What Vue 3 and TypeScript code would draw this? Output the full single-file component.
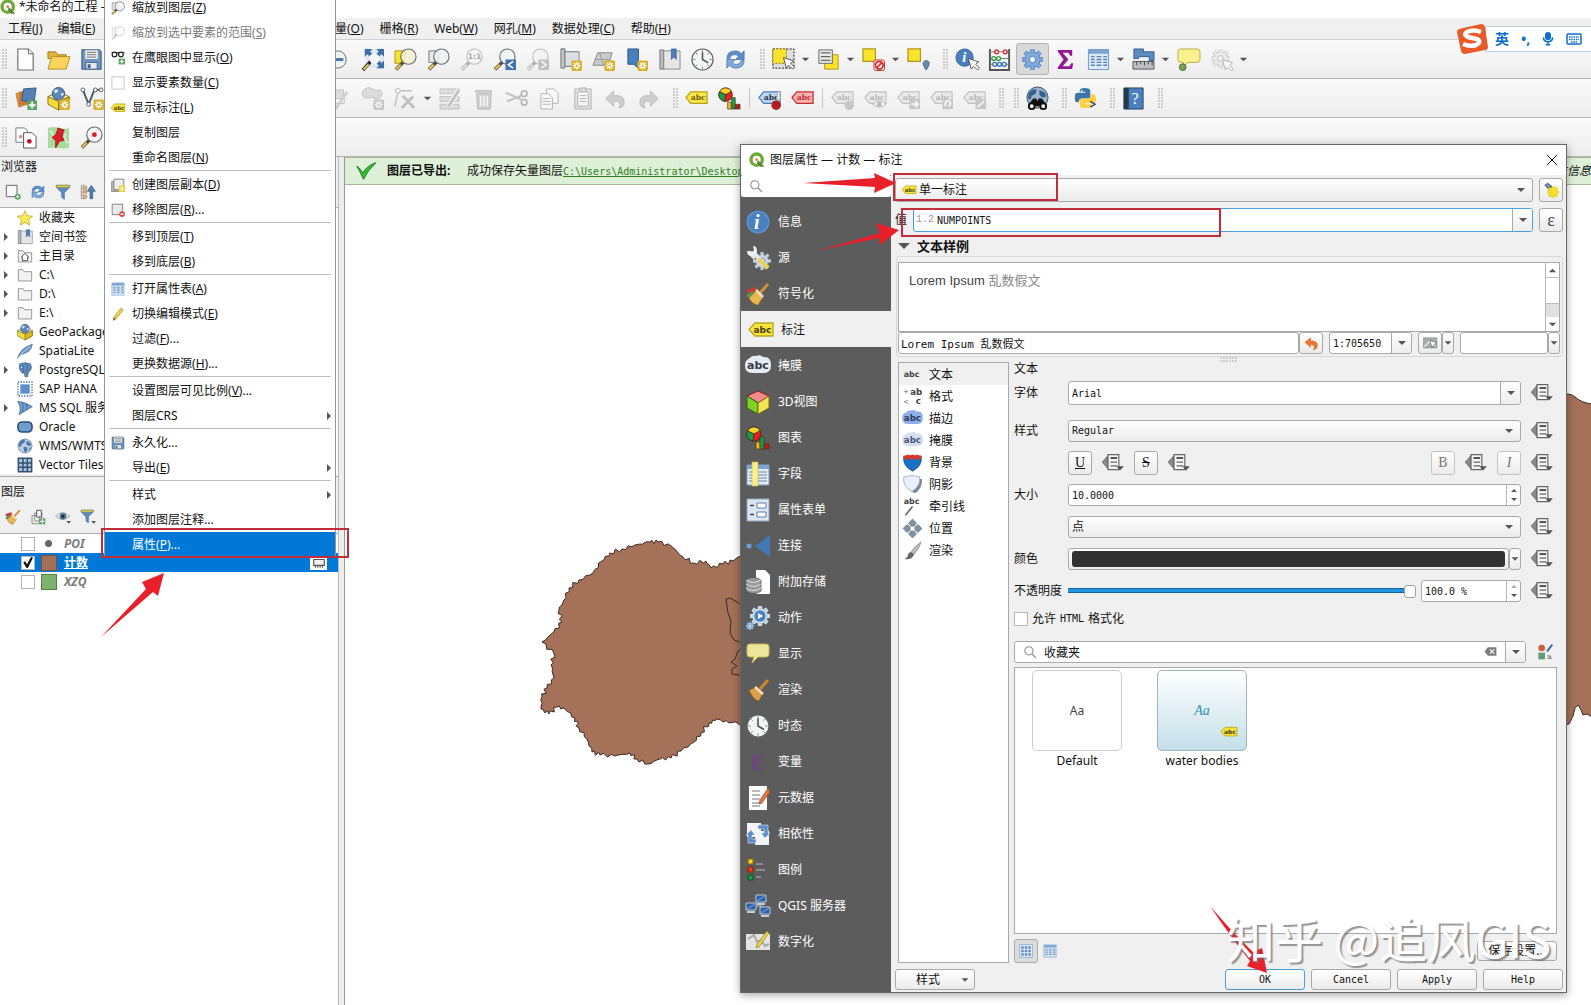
<script setup lang="ts">
import { h, ref } from 'vue'

const star = (x: number, y: number, c = '#d9b12e') =>
  `<rect x="${x}" y="${y}" width="11" height="11" rx="1.5" fill="${c}"/><path d="M${x + 5.5} ${y + 1.5}v8M${x + 1.5} ${y + 5.5}h8M${x + 2.7} ${y + 2.7}l5.6 5.6M${x + 8.3} ${y + 2.7}l-5.6 5.6" stroke="#fff" stroke-width="1.3"/><circle cx="${x + 5.5}" cy="${y + 5.5}" r="1.2" fill="${c}"/>`
const lens = (fill = '#eef2f4') =>
  `<path d="M10 14.500 2 22.500" stroke="#554a33" stroke-width="3.600"/><path d="M7 17.500 2.300 22.200" stroke="#f0c75e" stroke-width="2"/><circle cx="15" cy="9" r="8" fill="${fill}" fill-opacity=".85" stroke="#6a6f72" stroke-width="1.200"/>`
const tag = (fill: string, line: string, ink: string) =>
  `<path d="M6 5h17v12H6L1 11z" fill="${fill}" stroke="${line}" stroke-width="1.300"/><text x="6" y="14" font-family="DejaVu Serif" font-size="8" font-weight="700" fill="${ink}">abc</text>`
const disk = `<path d="M2 2h18l2 2v18H2z" fill="#6d97c4" stroke="#3c5f8a" stroke-width="1.200"/><path d="M5 2h14v10H5z" fill="#f2f2f2" stroke="#68809c" stroke-width=".8"/><path d="M7 4.500h10M7 7h10M7 9.500h10" stroke="#666"/><path d="M6 15h12v7H6z" fill="#e8e8e8" stroke="#3c5f8a"/><path d="M8 17h3v4H8z" fill="#3c5f8a"/>`
const table = `<path d="M1.500 1.500h21v21h-21z" fill="#dbe8f6" stroke="#6f96c6"/><path d="M2 2h20v4H2z" fill="#7ba3d3"/><path d="M4 9h4M10 9h5M17 9h4M4 12h4M10 12h5M17 12h4M4 15h4M10 15h5M17 15h4M4 18h4M10 18h5M17 18h4" stroke="#5c83b4" stroke-width="1.400"/>`
const globe = `<circle cx="12" cy="12" r="10.500" fill="#b9cde0" stroke="#4f6f90"/><path d="M4 6q5-5 8-3l-1 4-4 2-1 4-4-1zM14 4l6 3 1 4-4 1-3-3zM10 13l5 1 1 4-4 4-2-4zM18 15l3-1-2 5z" fill="#4b76a8"/>`
const box3d = `<path d="M1 10 12 15l11-5v8l-11 6-11-6z" fill="#f4dc3e" stroke="#8a7414"/><path d="M12 15v9l11-6v-8z" fill="#d9b520" stroke="#8a7414"/><path d="M1 10 12 5l11 5-11 5z" fill="#fff6b8" stroke="#8a7414"/><circle cx="12" cy="7" r="6.500" fill="#5c86b8" stroke="#3b5a80"/><path d="M7 4q3-3 5 0l-3 3zM14 7l4-1-2 4z" fill="#dbe8f4"/>`
const chart = `<circle cx="8" cy="8" r="7" fill="#e3201b" stroke="#3c2a10" stroke-width=".8"/><path d="M8 8 1.500 5A7 7 0 0 1 14 4.500z" fill="#f8d32c" stroke="#3c2a10" stroke-width=".8"/><path d="M8 8 7 15A7 7 0 0 1 1.500 5z" fill="#1d9a4a" stroke="#3c2a10" stroke-width=".8"/><path d="M10 16h4v7h-4z" fill="#f0b429" stroke="#3c2a10" stroke-width=".6"/><path d="M14 11h4v12h-4z" fill="#1d9a4a" stroke="#3c2a10" stroke-width=".6"/><path d="M18 18h5v5h-5z" fill="#b3211c" stroke="#3c2a10" stroke-width=".6"/>`
const refresh = `<path d="M3 11q0-8 9-8 4 0 6 3l3-3v9h-9l3-3q-2-3-5-2-3 0-4 4z" fill="#5b8fcb" stroke="#3a6ba5" stroke-width=".7"/><path d="M21 13q0 8-9 8-4 0-6-3l-3 3v-9h9l-3 3q2 3 5 2 3 0 4-4z" fill="#7fa9da" stroke="#3a6ba5" stroke-width=".7"/>`
const funnel = `<path d="M2 2h20v3l-8 8v10l-4-3v-7L2 5z" fill="#5c8cc0" stroke="#3e6797"/><path d="M2 2h20v3H2z" fill="#f0dd5a" stroke="#8f8630"/>`
const clock = `<circle cx="12" cy="12" r="11" fill="#f3f5f6" stroke="#5c6266" stroke-width="1.200"/><path d="M12 2.500v2M12 19.500v2M2.500 12h2M19.500 12h2M5.300 5.300l1.300 1.300M17.400 17.400l1.300 1.300M18.700 5.300l-1.300 1.300M5.300 18.700l1.300-1.300" stroke="#666"/><path d="M12 4.500V12l6 3.500" fill="none" stroke="#4b5054" stroke-width="1.600"/>`
const gearShape = (cx: number, cy: number, r: number, fill: string, line: string) => {
  let d = ''
  for (let i = 0; i < 8; i++) {
    const a = (i * Math.PI) / 4
    d += `M${cx} ${cy}L${(cx + Math.cos(a) * r).toFixed(1)} ${(cy + Math.sin(a) * r).toFixed(1)}`
  }
  return `<path d="${d}" stroke="${line}" stroke-width="${r * 0.42}"/><circle cx="${cx}" cy="${cy}" r="${r * 0.72}" fill="${fill}" stroke="${line}"/><path d="${d}" stroke="${fill}" stroke-width="${r * 0.26}"/><circle cx="${cx}" cy="${cy}" r="${r * 0.3}" fill="#f4f4f4" stroke="${line}"/>`
}
const cursor = (x: number, y: number) =>
  `<path d="M${x} ${y}l3 11 2.500-3 4 4 2-2-4-4 3-2.500z" fill="#fff" stroke="#555"/>`
const page = `<path d="M4 1h11l5 5v17H4z" fill="#fff" stroke="#6b6b6b" stroke-width="1.200"/><path d="M15 1v5h5" fill="#eee" stroke="#6b6b6b"/>`
const folder = `<path d="M2 4h7l2 3h11v14H2z" fill="#f2f2f2" stroke="#8b8b8b" stroke-width="1.300"/>`
const scroll = `<path d="M2 1h4v18h14V4H6" fill="#d4d6d8" stroke="#777"/><path d="M6 4h15v15H6z" fill="#dcdedf" stroke="#888"/><path d="M2 1h4v20H2z" fill="#c1c4c6" stroke="#777"/>`
const broom = `<path d="m14 11 8-9" stroke="#c98832" stroke-width="3"/><path d="M3 12l8-3 6 6-4 8q-6-1-10-11z" fill="#dfa04b" stroke="#8c5a1d" stroke-width=".7"/><path d="m9 9 8 7" stroke="#f3dfb5" stroke-width="2.500"/>`
const paintbrush = `<path d="m14 11 8-9" stroke="#d0913b" stroke-width="3"/><path d="M0 8l9-3 5 6-8 5z" fill="#c73e38"/><path d="M0 14l6 3 4-4-4-4z" fill="#579c56"/><path d="M3 16l7-7 7 6-5 8q-6-1-9-7z" fill="#e9b552" stroke="#987427" stroke-width=".7"/><path d="m10 8 7 7" stroke="#f3dfb5" stroke-width="2.500"/>`
const pencil = `<path d="M17 2l4 3L9 20l-5 3 1-6z" fill="#f3d34a" stroke="#93792b"/><path d="m4 23 1-5 3 2z" fill="#635a40"/>`
const elephant = `<path d="M4 3q8-4 16 0 4 6-1 11l-2 2-1 6h-4l-1-6-3 1q-6-5-4-14z" fill="#5e8cbd" stroke="#31577f"/><path d="M9 5q0 6 1 11M15 5q2 5-1 10" fill="none" stroke="#31577f"/><circle cx="7" cy="8" r="1" fill="#fff"/>`
const abcText = (fill: string, halo: string) =>
  `<path d="M4 4q2-3 6-2 4-2 7 1 8-1 8 8 0 8-7 8H6q-7 0-7-8 0-5 5-7z" fill="${halo}"/><text x="1" y="15" font-family="DejaVu Sans" font-size="11" font-weight="700" fill="${fill}">abc</text>`
const server = (x: number, y: number) =>
  `<path d="M${x} ${y}h10v7H${x}z" fill="#2e62a8" stroke="#b9c7d6"/><path d="M${x + 1} ${y + 9}h8" stroke="#c8cdd2" stroke-width="2"/><path d="M${x + 1} ${y + 6}l8-5" stroke="#7ea5d6"/>`
const off = (s: string) => `<g opacity=".4" style="filter:grayscale(1)">${s}</g>`
const square = (x: number, y: number) => `<path d="M${x} ${y}h13v13h-13z" fill="#fbe32c" stroke="#ab9a1e" stroke-width="1.300"/>`

const icons: Record<string, string> = {
  qgis: `<circle cx="11.500" cy="11.500" r="8.500" fill="none" stroke="#73a83c" stroke-width="5"/><path d="m13 12 10 10h-6l-5-5z" fill="#4f8a2b"/><circle cx="11.500" cy="11.500" r="2" fill="#e8793a"/>`,
  page,
  open: `<path d="M1 4h8l2 3h9v4H1z" fill="#e3b23a" stroke="#a07c1f"/><path d="M1 22 5 9h19l-4 13z" fill="#fbd55b" stroke="#b58d28"/>`,
  save: disk,
  zoomout: `<circle cx="10" cy="12" r="9" fill="#eef2f6" stroke="#6a6f72"/><path d="M4 12h12" stroke="#4474a8" stroke-width="3"/>`,
  zoomfull: `<path d="M4 1h20v20H4z" fill="#dfe9f4"/><path d="M4 1h8L4 9zM24 1v8l-8-8zM24 21h-8l8-8z" fill="#3f6fa8"/><path d="M5 2l6 6M23 2l-6 6M23 20l-6-6" stroke="#3f6fa8" stroke-width="4"/><path d="M11 13 2 23" stroke="#222" stroke-width="3.500"/><path d="M8 17l-5.500 5.500" stroke="#f0c75e" stroke-width="2"/><circle cx="14" cy="11" r="5.500" fill="#f4f6f8"/>`,
  zoomsel: `<path d="M1 3h10v13H1z" fill="#fbe32c" stroke="#ab9a1e"/>` + lens('#f4f0ce'),
  zoomlayer: `<path d="M2 3h10v12H2z" fill="#e8e8e8" stroke="#777"/>` + lens(),
  zoomnative: off(lens() + `<text x="8" y="12" font-family="DejaVu Sans" font-size="8" font-weight="700" fill="#333">1:1</text>`),
  zoomlast: lens() + `<path d="M13 12h11v11H13z" fill="#3f73af"/><path d="m21 14-5 3.500 5 3.500" fill="none" stroke="#fff" stroke-width="1.600"/>`,
  zoomnext: off(lens() + `<path d="M13 12h11v11H13z" fill="#777"/><path d="m16 14 5 3.500-5 3.500" fill="none" stroke="#fff" stroke-width="1.600"/>`),
  newmap: scroll + star(13, 13),
  new3d: `<path d="M6 5h15l-4 13H1z" fill="#c8cbcc" stroke="#888"/><path d="m8 5 4 13M3 12h16" stroke="#999"/>` + star(13, 13),
  bookmark: `<path d="M3 1h11v20l-5-4H3z" fill="#4a7fbd" stroke="#2d5788"/>` + star(13, 13),
  book: `<path d="M2 2h4v20H2z" fill="#b9bcbe" stroke="#777"/><path d="M6 3h17v19H6z" fill="#e6e6e6" stroke="#888"/><path d="M14 1h5v11l-2.500-3-2.500 3z" fill="#4a7fbd" stroke="#2d5788" stroke-width=".7"/>`,
  clock,
  refresh,
  select: `<path d="M1 1h22v20H1z" fill="#ddd" stroke="#111" stroke-dasharray="2 1.500"/><path d="M1 1h14v15H1z" fill="#fbe32c" stroke="#80752a" stroke-dasharray="2 1.500"/>` + cursor(12, 10),
  selform: `<path d="M8 7h14v15H8z" fill="#fbe32c" stroke="#ab9a1e"/><path d="M2 2h14v14H2z" fill="#e9eaea" stroke="#666"/><path d="M4 5h10M4 9h10M4 13h10" stroke="#666" stroke-width="1.300"/>`,
  deselect: square(1, 1) + `<rect x="12.500" y="12.500" width="11" height="11" rx="2" fill="#fff" stroke="#b33"/><circle cx="18" cy="18" r="4" stroke="#d33" stroke-width="2"/><path d="m15 21 6-6" stroke="#d33" stroke-width="2"/>`,
  selloc: square(1, 1) + `<path d="M20 23q-4-6-3-8 3-4 6 0 1 2-3 8z" fill="#6b89a8" stroke="#48637f"/>`,
  identify: `<circle cx="10" cy="10" r="9" fill="#4a7fbd" stroke="#356398"/><text x="7.500" y="15" font-family="Liberation Serif" font-size="15" font-style="italic" font-weight="700" fill="#fff">i</text>` + cursor(14, 11),
  abacus: `<path d="M2 1v22h20V1M1 23h22" fill="none" stroke="#555" stroke-width="2"/><path d="M2 4h20M2 11h20M2 17h20" stroke="#777"/><g fill="#fff" stroke-width="1.500"><g stroke="#c33"><circle cx="9" cy="4" r="2"/><circle cx="18" cy="4" r="2"/></g><g stroke="#3a9a4a"><circle cx="6" cy="11" r="2"/><circle cx="11" cy="11" r="2"/></g><g stroke="#3f73af"><circle cx="7" cy="17" r="2"/><circle cx="12" cy="17" r="2"/><circle cx="17" cy="17" r="2"/></g></g>`,
  gear: gearShape(12, 12, 11, '#7fa9da', '#4a7fbd'),
  sigma: `<path d="M4 2h15v6h-2l-2-3H9l6 7-6 7h7l2-3h2l-1 6H4v-2l6-8-6-8z" fill="#93178f"/>`,
  table,
  measure: `<path d="M2 1h10v3h11v9h-5v-4H7v2H2z" fill="#5c8cc0" stroke="#34608f"/><path d="M1 14h22v8H1z" fill="#bcbfc1" stroke="#555"/><path d="M5 14v4M9 14v3M13 14v4M17 14v3M21 14v4" stroke="#444"/>`,
  tip: `<path d="M4 1h17q3 0 3 3v8q0 3-3 3H11l-5 6 1-6H4q-3 0-3-3V4q0-3 3-3z" fill="#faf08e" stroke="#b8ac4a"/><circle cx="6" cy="20" r="3.500" fill="#7aa05c" stroke="#4e7038"/>`,
  action: off(gearShape(11, 11, 10, '#ddd', '#777') + cursor(13, 12)),
  addlayer: `<path d="M2 7l9-3 3 14-9 3z" fill="#e8962f" stroke="#a3601a" stroke-width=".6"/><path d="m5 5 10-1 1 14-11 1z" fill="#c9793a"/><path d="M10 2l13-1-2 15-13-2z" fill="#5482b5" stroke="#345a85"/><path d="M14 14h10v10H14z" fill="#5aa467"/><path d="M19 15.500v7M15.500 19h7" stroke="#fff" stroke-width="2"/>`,
  geopackage: box3d + star(13, 13),
  geopkg: box3d,
  newvector: `<path d="M3 3 9 18l6-15h6" fill="none" stroke="#445566" stroke-width="2"/><g fill="#fff" stroke="#556"><circle cx="3" cy="3" r="2"/><circle cx="9" cy="18" r="2"/><circle cx="16" cy="3" r="2"/><circle cx="22" cy="3" r="2"/></g>` + star(14, 13),
  print: off(`<path d="M1 3h15v14H1z" fill="#bbb" stroke="#777"/><path d="M3 12h14v5H3z" fill="#fff" stroke="#777"/><path d="M20 5 8 23" stroke="#999" stroke-width="3"/>`),
  blob: off(`<path d="M4 2q4-3 8 0t8 1q4 4 0 8-3 3-8 0-8 1-9 0-4-5 1-9z" fill="#b5b5b5" stroke="#777"/>` + star(13, 13, '#888')),
  node: off(`<circle cx="4" cy="4" r="2.500" fill="#fff" stroke="#555"/><path d="M4 6 1 20M7 4h12" stroke="#777" stroke-width="1.500"/><path d="m9 9 12 13M20 10 8 22" stroke="#777" stroke-width="3"/>`),
  attrs: off(`<path d="M1 2h20v5H1zM1 10h20v5H1zM1 18h20v5H1z" fill="#bdbdb0" stroke="#777"/><path d="M21 3 10 20" stroke="#fff" stroke-width="5"/><path d="M21 3 10 20" stroke="#777" stroke-width="3"/>`),
  trash: off(`<path d="M5 7h15l-1 16H6z" fill="#c99" stroke="#844"/><path d="M3 3h18v3H3z" fill="#b77"/><path d="M9 9v11M12.500 9v11M16 9v11" stroke="#fff" stroke-width="1.500"/>`),
  cut: off(`<path d="m1 6 16 7M2 15l15-6" stroke="#777" stroke-width="2"/><circle cx="20" cy="7" r="3" fill="none" stroke="#555" stroke-width="1.600"/><circle cx="20" cy="16" r="3" fill="none" stroke="#555" stroke-width="1.600"/>`),
  copy: off(`<path d="M9 2h8l4 4v11H9z" fill="#fff" stroke="#555"/><path d="M3 7h8l4 4v12H3z" fill="#fff" stroke="#555"/><path d="M5 12h8M5 15h8M5 18h8" stroke="#555"/>`),
  paste: off(`<path d="M4 2h17v21H4z" fill="#ccc" stroke="#555"/><path d="M7 5h11v15H7z" fill="#fff" stroke="#555"/><path d="M9 9h7M9 12h7M9 15h7M9 1h7v4H9z" stroke="#555"/>`),
  undo: off(`<path d="M10 4v5q11-1 11 7 0 5-5 6 3-9-6-7v5L2 12z" fill="#999" stroke="#666"/>`),
  redo: off(`<path d="M14 4v5Q3 8 3 16q0 5 5 6-3-9 6-7v5l8-8z" fill="#999" stroke="#666"/>`),
  tag: tag('#fae849', '#b5a01e', '#6c5c10'),
  chart,
  tagpin: tag('#bcd6ee', '#4a7fbd', '#234') + `<circle cx="19" cy="19" r="5" fill="#b01e20"/><path d="M20 5h3v9h-3z" fill="#eee" stroke="#888" stroke-width=".6"/>`,
  tagred: tag('#f6b5b2', '#c92b2b', '#c92b2b'),
  tagoff1: off(tag('#ddd', '#777', '#555') + `<circle cx="19" cy="19" r="5" fill="#888"/>`),
  tagoff2: off(tag('#ddd', '#777', '#555') + `<path d="M9 18q7-7 14 0-7 6-14 0z" fill="#fff" stroke="#555"/><circle cx="16" cy="18" r="2.500" fill="#666"/>`),
  tagoff3: off(tag('#ddd', '#777', '#555') + `<path d="M13 13h11v10H13z" fill="#888"/><path d="M15 18h7m-3-3 3 3-3 3" fill="none" stroke="#fff" stroke-width="2"/>`),
  tagoff4: off(tag('#ddd', '#777', '#555') + `<path d="M13 13h11v10H13z" fill="#888"/><path d="M16 20v-4q3-3 5 0 1 3-2 4" fill="none" stroke="#fff" stroke-width="2"/>`),
  tagoff5: off(tag('#ddd', '#777', '#555') + `<path d="M13 13h11v10H13z" fill="#888"/><path d="m15 21 7-6" stroke="#fff" stroke-width="2"/>`),
  metasearch: `<circle cx="12" cy="11" r="11" fill="#9bb4cc" stroke="#35506f"/><path d="M3 6q5-5 8-3l-1 4-4 2-1 4-3-1zM14 3l6 3 1 4-4 1-3-3z" fill="#35608f"/><path d="M3 20 8 13h2l2 4 2-4h2l5 7" fill="#111" stroke="#111" stroke-width="2"/><circle cx="6" cy="20" r="3" fill="#fff" stroke="#111" stroke-width="2"/><circle cx="18" cy="20" r="3" fill="#fff" stroke="#111" stroke-width="2"/>`,
  python: `<path d="M11 1q6 0 6 3v6q0 2-3 2H8q-3 0-3 4H3q-3-1-2-7 0-3 3-3h8V5H6V3q1-2 5-2z" fill="#3d75a8"/><path d="M12 22q-6 0-6-3v-5q0-2 3-2h6q3 0 3-5h2q3 1 3 6 0 4-3 4h-8v1h6v2q-1 2-6 2z" fill="#fbd043"/><circle cx="8" cy="4" r="1" fill="#fff"/><path d="m17 15 5 3-5 3" fill="none" stroke="#345" stroke-width="1.500"/>`,
  help: `<path d="M2 1h20v22H2z" fill="#4a7fbd" stroke="#24415f"/><path d="M2 1h5v22H2z" fill="#27384a"/><text x="10" y="18" font-family="Liberation Serif" font-size="17" fill="#fff">?</text>`,
  dotpages: `<path d="M2 2h9l3 3v12H2z" fill="#fff" stroke="#777"/><circle cx="7" cy="11" r="2" fill="#e88"/><path d="M10 7h9l4 4v12H10z" fill="#fff" stroke="#555"/><circle cx="16" cy="16" r="2.500" fill="#c8102e"/>`,
  pinmap: `<path d="M1 2q6-2 11 0t11 0v21q-6 1-11 0t-11 0z" fill="#a6dc9c"/><path d="M3 5q6 5 1 9M20 8q-5 4 2 10" stroke="#d8efcc" stroke-width="2" fill="none"/><path d="m11 2 7 2-1 2-1 5 2 4-5 1-4 7 0-8-4-3 4-3 2-5z" fill="#dc1f26" stroke="#8e1015" stroke-width=".7"/>`,
  dotlens: lens('#f3f3f3') + `<circle cx="15" cy="9" r="2.500" fill="#d81e26"/>`,
  boxplus: `<path d="M2 2h16v17H2z" fill="#f8f8f8" stroke="#555" stroke-width="1.300"/><circle cx="19" cy="19" r="4.500" fill="#5aa467"/><path d="M19 16.500v5M16.500 19h5" stroke="#fff" stroke-width="1.300"/>`,
  funnel,
  collapse: `<path d="M8 2H2v20h6M2 7h6M2 12h6M2 17h6" fill="none" stroke="#777"/><path d="M5 4h5v4H5zM5 10h5v4H5zM5 17h5v4H5z" fill="#e8bd89" stroke="#b17a35"/><path d="M15 22V11h-4l6-9 6 9h-4v11z" fill="#4f7fb0" stroke="#2d5788"/>`,
  fav: `<path d="m12 1 3.300 7.500 8.200.8-6.200 5.400 1.800 8.100-7.100-4.200-7.100 4.200 1.800-8.100L.5 9.300l8.200-.8z" fill="#fbec53" stroke="#b09a1c"/>`,
  home: folder + `<path d="M6 14l6-6 6 6M8 13v6h8v-6" fill="#fff" stroke="#444" stroke-width="1.400"/>`,
  folder,
  feather: `<path d="M1 23Q4 8 23 2q-2 12-14 14l-4 2z" fill="#6f9ccb" stroke="#3b5f88"/><path d="M1 23Q8 13 20 5" fill="none" stroke="#e3edf6"/>`,
  postgres: elephant,
  hana: `<path d="M1.500 1.500h21v21h-21z" fill="#fff" stroke="#3f6fa8" stroke-width="2" stroke-dasharray="2 2"/><path d="M5 5h14v14H5z" fill="#5b8fcb"/>`,
  mssql: `<path d="M1 2q12 1 22 8-10 6-20 12 4-10-2-20z" fill="#6f9ccb" stroke="#34608f"/><path d="M8 4q3 8 0 14M14 6q2 5 0 9" fill="none" stroke="#34608f"/>`,
  oracle: `<rect x="1.500" y="4.500" width="21" height="15" rx="6" fill="#6f9ccb" stroke="#2d4f78" stroke-width="2.500"/>`,
  globe,
  grid: `<path d="M2 2h20v20H2zM9 2v20M15.500 2v20M2 9h20M2 15.500h20" fill="#a9c3e2" stroke="#35506f" stroke-width="2.200"/>`,
  style: paintbrush,
  group: `<path d="M3 10h11v12H3zM7 6h11v12H7z" fill="#eee" stroke="#666"/><path d="M10 2h7v10h-7z" fill="#fff" stroke="#555" stroke-width="1.500"/><path d="M14 14h9v9h-9z" fill="#5aa467"/><path d="M18.500 15v7M15 18.500h7" stroke="#fff" stroke-width="1.500"/>`,
  eye: `<path d="M1 11q10-11 21 0-11 9-21 0z" fill="#eef2f5" stroke="#6f8597"/><circle cx="12" cy="11" r="5" fill="#4f7290"/><circle cx="12" cy="11" r="2" fill="#122"/><path d="M17 18h7l-3.500 4z" fill="#555"/>`,
  funneldd: `<g transform="scale(.9)">${funnel}</g><path d="M17 18h7l-3.500 4z" fill="#555"/>`,
  glasses: `<path d="M1 3h22" stroke="#222" stroke-width="2"/><circle cx="6" cy="6" r="4" fill="#fff" stroke="#222" stroke-width="2"/><circle cx="17" cy="6" r="4" fill="#fff" stroke="#222" stroke-width="2"/><path d="M13 13h11v10H13z" fill="#5aa467"/><path d="M18.500 14.500v7M15 18h7" stroke="#fff" stroke-width="2"/>`,
  box: `<path d="M1.500 1.500h21v21h-21z" fill="#fff" stroke="#bbb" stroke-width="1.400"/>`,
  dup: `<path d="M1 6h5v16h14v1H1z" fill="#bbb" stroke="#666"/><path d="M5 2h17v18H5z" fill="#efefef" stroke="#666" stroke-width="1.300"/>` + star(13, 13, '#e8cf3b'),
  remove: `<path d="M2 2h18v18H2z" fill="#e9e9e9" stroke="#666" stroke-width="1.300"/><circle cx="19" cy="19" r="5" fill="#dc4b4b"/><path d="M16 19h6" stroke="#fff" stroke-width="2"/>`,
  zoomoff: off(`<path d="M2 3h10v12H2z" fill="#e8e8e8" stroke="#777"/>` + lens()),
  pencil,
  info: `<circle cx="12" cy="12" r="11.500" fill="#5b93d1"/><circle cx="12" cy="12" r="10" fill="#4a80c0"/><text x="8" y="19" font-family="Liberation Serif" font-size="20" font-style="italic" font-weight="700" fill="#fff">i</text>`,
  source: gearShape(16, 15, 9, '#c9d4df', '#8292a3') + `<path d="m3 6 6 6M9 8 21 22" stroke="#e4e6e8" stroke-width="4"/><path d="M1 5q0 5 5 5t5-5-4-5l1 4-2 2-3-1z" fill="#edeff0"/><path d="m12 13 10 9" stroke="#e8d25a" stroke-width="4"/>`,
  masks: abcText('#333a44', '#e6ecf5'),
  cube: `<path d="m12 1 11 5-11 7L1 6z" fill="#f28a8a" stroke="#8a1c1c"/><path d="m1 6 11 7v11L1 18z" fill="#7ed321" stroke="#355c0c"/><path d="m23 6-11 7v11l11-6z" fill="#f5e553" stroke="#7c7113"/>`,
  fields: `<path d="M1 3h22v20H1z" fill="#e4ecf6" stroke="#7d9bc2"/><path d="M1 3h22v4H1z" fill="#7ba3d3"/><path d="M3 10h18M3 13h18M3 16h18M3 19h18" stroke="#6b86a8"/><path d="M6 0h6v24H6z" fill="#faf08e" stroke="#c9bb4b" stroke-width=".7"/>`,
  form: `<path d="M1 1h22v22H1z" fill="#dce6f1" stroke="#8ea7c4"/><path d="M11 5h9v5h-9zM11 14h9v5h-9z" fill="#fff" stroke="#5d7ea8"/><path d="M4 7.500h4M4 16.500h4" stroke="#444" stroke-width="1.500"/>`,
  join: `<circle cx="3" cy="12" r="2.500" fill="#6da1d8"/><path d="M24 1v22L9 12z" fill="#4279b5"/>`,
  storage: `<path d="M10 0h9l5 5v19H10z" fill="#fff"/><path d="M0 10q7-5 15 0v11q-7 5-15 0z" fill="#9a9a9a" stroke="#555" stroke-width=".8"/><path d="M0 10q7 5 15 0M0 14q7 5 15 0M0 18q7 5 15 0" fill="none" stroke="#ddd"/>`,
  actions: gearShape(14, 10, 10, '#b8cfe8', '#e6ebf0') + `<circle cx="14" cy="10" r="5.500" fill="#4a80c0"/><path d="m12 7 5 3-5 3z" fill="#fff"/>` + gearShape(4, 20, 4, '#7fa9da', '#a9c3e2'),
  bubble: `<path d="M4 2h16q3 0 3 3v7q0 3-3 3h-8l-6 6 2-6H4q-3 0-3-3V5q0-3 3-3z" fill="#efe59a" stroke="#c8b95b"/>`,
  broom,
  eps: `<text x="5" y="20" font-family="Liberation Serif" font-size="31" font-weight="700" fill="#6d4583">ε</text>`,
  metadata: `<path d="M3 0h18v24H3z" fill="#fff"/><path d="M6 5h8M6 9h8M6 13h8M6 17h10M6 20h8" stroke="#777"/><path d="m22 2 2 4-8 11-3 1 1-4z" fill="#df7647" stroke="#8a4a2a" stroke-width=".6"/>`,
  deps: `<path d="M1 1h14v14H1zM9 9h14v14H9z" fill="#f2f4f7"/><path d="M12 3h10v8l2 0-5 5-4-5h3V7h-6zM10 21H2v-8H0l5-5 4 5H6v4h4z" fill="#5b8fcb" stroke="#dfe8f3" stroke-width=".6"/>`,
  legend: `<path d="M2 1h5v5H2z" fill="#f8d32c" stroke="#7b6712"/><path d="M2 9h5v5H2z" fill="#e8401c" stroke="#7c210d"/><path d="M2 17h5v5H2z" fill="#1d9a4a" stroke="#0d4e24"/><path d="M10 6h7M10 12h9M10 19h5" stroke="#9a9a9a" stroke-width="1.500"/>`,
  network: `<path d="M6 15V12h10v4" fill="none" stroke="#bbb"/>` + server(10, 1) + server(0, 9) + server(14, 13),
  digitize: `<path d="M0 4h24v16H0z" fill="#e4e4e0"/><path d="m2 9 6-4 3 7 4-2 4 6 4-2" fill="none" stroke="#a5a9b0" stroke-width="2"/><path d="M21 1l2 2-10 14-3 1 1-4z" fill="#e8ce4a" stroke="#86762a" stroke-width=".6"/>`,
  labels: `<path d="M6 5h18v13H6l-6-6.500z" fill="#f7e43b" stroke="#b9a820" stroke-width="1.300"/><text x="4.500" y="15" font-family="DejaVu Sans" font-size="9" font-weight="700" fill="#43401a">abc</text>`,
  ltext: `<text x="1" y="15" font-family="DejaVu Sans" font-size="10" font-weight="700" fill="#444">abc</text>`,
  lformat: `<text x="0" y="9" font-family="DejaVu Sans" font-size="9" fill="#666">+</text><text x="9" y="10" font-family="DejaVu Sans" font-size="11" font-weight="700" fill="#444">ab</text><text x="0" y="22" font-family="DejaVu Sans" font-size="9" fill="#666">&lt;</text><text x="16" y="22" font-family="DejaVu Sans" font-size="11" font-weight="700" fill="#444">c</text>`,
  lbuffer: abcText('#2e3d63', '#8fb0e8'),
  lmask: abcText('#4c5a78', '#d3def1'),
  shield: `<path d="M1 4h22q2 12-11 19Q-1 16 1 4z" fill="#1672c4" stroke="#1b4977"/><path d="M1 8V3q3 1 5-1 3 2 6 0 3 2 6 0 2 2 5 1v5z" fill="#d8352c"/>`,
  shadow: `<path d="M5 5h19q1 12-9 18Q3 18 5 5z" fill="#7c8796"/><path d="M1 2q4 1 6-1h8q2 2 6 1 2 12-10 19Q-1 14 1 2z" fill="#e9effb" stroke="#9aa5ba"/>`,
  callout: `<text x="1" y="9" font-family="DejaVu Sans" font-size="10" font-weight="700" fill="#444">abc</text><path d="M12 12 3 23" stroke="#666" stroke-width="2"/>`,
  place: `<path d="m12 0 5 5-3 4h-4L7 5zM12 24l5-5-3-4h-4l-3 4zM0 12l5-5 4 3v4l-4 3zM24 12l-5-5-4 3v4l4 3z" fill="#7f93a5" stroke="#55697b" stroke-width=".7"/>`,
  brush: `<path d="M23 1Q15 6 10 14l4 3Q21 9 23 1z" fill="#b9bdc0" stroke="#777" stroke-width=".7"/><path d="M10 14q-4 1-4 5-2 3-4 4 9 1 12-6z" fill="#666"/>`,
  search: `<circle cx="10" cy="10" r="7" fill="none" stroke="#8d8d8d" stroke-width="1.800"/><path d="m15 15 7 7" stroke="#8d8d8d" stroke-width="2.200"/>`,
  define: `<path d="M6 3v16L-1 11z" fill="#8a8a8a" stroke="#555" stroke-width=".8"/><path d="M6 2h13v18H6z" fill="#f6f6f6" stroke="#666" stroke-width="1.400"/><path d="M9 6h8" stroke="#555" stroke-width="2.400"/><path d="M9 11h8M9 15.500h8" stroke="#666" stroke-width="1.400"/><path d="M16 16h9l-4.500 5z" fill="#555"/>`,
  undoorange: `<path d="M11 2v5q11 0 11 8 0 6-8 8 5-8-3-9v5L1 10z" fill="#e8743a"/>`,
  mapcursor: `<path d="M1 3h21v16H1z" fill="#a9adb0" stroke="#777"/><path d="m2 17 8-8 4 4" stroke="#eee" stroke-width="2" fill="none"/>` + cursor(11, 7),
  sunset: `<path d="m2 5 5-4 8 6-6 5z" fill="#44607d"/><path d="m6 3 4 6M3 7l9-3" stroke="#bcd"/>` + gearShape(15, 15, 9, '#f6de2c', '#dcc024') + `<circle cx="15" cy="15" r="5" fill="#f6de2c"/>`,
  clear: `<path d="M1 12 7 4h16v16H7z" fill="#7d7d7d"/><path d="m11 8 8 8M19 8l-8 8" stroke="#fff" stroke-width="2"/>`,
  manage: `<circle cx="7" cy="6" r="5" fill="#cf5c3c"/><path d="M2 13h10v10H2z" fill="#5d9e79"/><path d="m23 1-8 10" stroke="#3c6ea5" stroke-width="3"/><text x="15" y="23" font-family="DejaVu Serif" font-size="12" fill="#555">a</text>`,
  icongrid: `<path d="M1 1h22v22H1z" fill="#e2ecf8" stroke="#6f96c6"/><path d="M4 4h4v4H4zM10 4h4v4h-4zM16 4h4v4h-4zM4 10h4v4H4zM10 10h4v4h-4zM16 10h4v4h-4zM4 16h4v4H4zM10 16h4v4h-4zM16 16h4v4h-4z" fill="#5b87c0"/>`,
  memory: `<path d="M3 6h18v10H3z" fill="#f3f3f3" stroke="#555" stroke-width="2"/><path d="M6 16v4M10 16v4M14 16v4M18 16v4" stroke="#555" stroke-width="2"/>`,
  check: `<path d="M1 6q4 3 7 8Q14 5 24 2 14 11 9 22 5 13 1 6z" fill="#2fbf2f" stroke="#13691a"/>`,
  down: `<path d="M4 8h16l-8 8z" fill="#555"/>`,
  up: `<path d="M4 16h16l-8-8z" fill="#555"/>`,
  right: `<path d="M8 4v16l8-8z" fill="#555"/>`,
  close: `<path d="m2 2 20 20M22 2 2 22" stroke="#111" stroke-width="2"/>`,
}

const Ico = (p: { n: string }) =>
  h('svg', { class: 'ic', viewBox: '0 0 24 24', fill: 'none', 'aria-hidden': 'true', innerHTML: icons[p.n] })
Ico.props = ['n']

type Menu = { t: string; k?: string; tail?: string; icon?: string; sub?: boolean; off?: boolean; on?: boolean }
const ctxGroups: Menu[][] = [
  [
    { t: '缩放到图层', k: 'Z', icon: 'zoomlayer' },
    { t: '缩放到选中要素的范围', k: 'S', icon: 'zoomoff', off: true },
    { t: '在鹰眼图中显示', k: 'O', icon: 'glasses' },
    { t: '显示要素数量', k: 'C', icon: 'box' },
    { t: '显示标注', k: 'L', icon: 'labels' },
    { t: '复制图层' },
    { t: '重命名图层', k: 'N' },
  ],
  [
    { t: '创建图层副本', k: 'D', icon: 'dup' },
    { t: '移除图层', k: 'R', tail: '...', icon: 'remove' },
  ],
  [
    { t: '移到顶层', k: 'T' },
    { t: '移到底层', k: 'B' },
  ],
  [
    { t: '打开属性表', k: 'A', icon: 'table' },
    { t: '切换编辑模式', k: 'E', icon: 'pencil' },
    { t: '过滤', k: 'F', tail: '...' },
    { t: '更换数据源', k: 'H', tail: '...' },
  ],
  [
    { t: '设置图层可见比例', k: 'V', tail: '...' },
    { t: '图层CRS', sub: true },
  ],
  [
    { t: '永久化...', icon: 'save' },
    { t: '导出', k: 'E', sub: true },
  ],
  [
    { t: '样式', sub: true },
    { t: '添加图层注释...' },
    { t: '属性', k: 'P', tail: '...', on: true },
  ],
]
const menuLeft = [['工程', 'J'], ['编辑', 'E']]
const menuRight = [['矢量', 'O'], ['栅格', 'R'], ['Web', 'W'], ['网孔', 'M'], ['数据处理', 'C'], ['帮助', 'H']]

// '|' draws a drag handle, '/' a thin separator, a trailing '+' adds a drop-down arrow, a trailing '*' marks a pressed button
const toolbars = [
  {
    left: ['page', 'open', 'save'],
    right: 'zoomout zoomfull zoomsel zoomlayer zoomnative zoomlast zoomnext newmap new3d bookmark book clock refresh | select+ selform+ deselect+ selloc | identify abacus gear* sigma table+ measure+ tip action+'.split(' '),
  },
  {
    left: ['addlayer', 'geopackage', 'newvector'],
    right: 'print blob node+ attrs trash cut copy paste undo redo | tag chart / tagpin tagred / tagoff1 tagoff2 tagoff3 tagoff4 tagoff5 | | metasearch | python | help |'.split(' '),
  },
  { left: ['dotpages', 'pinmap', 'dotlens'], right: [] as string[] },
]
const bare = (s: string) => s.replace(/[+*]$/, '')

const tree = [
  ['fav', '收藏夹', ''], ['book', '空间书签', '1'], ['home', '主目录', '1'], ['folder', 'C:\\', '1'], ['folder', 'D:\\', '1'],
  ['folder', 'E:\\', '1'], ['geopkg', 'GeoPackage', ''], ['feather', 'SpatiaLite', ''], ['postgres', 'PostgreSQL', '1'],
  ['hana', 'SAP HANA', ''], ['mssql', 'MS SQL 服务', '1'], ['oracle', 'Oracle', ''], ['globe', 'WMS/WMTS', ''], ['grid', 'Vector Tiles', ''],
]
const tabs = [
  ['info', '信息'], ['source', '源'], ['style', '符号化'], ['labels', '标注'], ['masks', '掩膜'], ['cube', '3D视图'], ['chart', '图表'],
  ['fields', '字段'], ['form', '属性表单'], ['join', '连接'], ['storage', '附加存储'], ['actions', '动作'], ['bubble', '显示'],
  ['broom', '渲染'], ['clock', '时态'], ['eps', '变量'], ['metadata', '元数据'], ['deps', '相依性'], ['legend', '图例'],
  ['network', 'QGIS 服务器'], ['digitize', '数字化'],
]
const activeTab = ref('标注')
const parts = [
  ['ltext', '文本'], ['lformat', '格式'], ['lbuffer', '描边'], ['lmask', '掩膜'], ['shield', '背景'], ['shadow', '阴影'],
  ['callout', '牵引线'], ['place', '位置'], ['brush', '渲染'],
]
const activePart = ref('文本')
const layers = ref([
  { name: 'POI', on: false, kind: 'dot', active: false },
  { name: '计数', on: true, kind: 'brown', active: true },
  { name: 'XZQ', on: false, kind: 'green', active: false },
])
const sample = ref('Lorem Ipsum 乱数假文')
const size = ref('10.0000')
const opacity = ref(100)
const html = ref(false)
const preset = ref('收藏夹')

// Roughens the straight edges between district vertices so that they read as a surveyed boundary
const boundary = (pts: number[][]) =>
  'M' + pts.map(([x, y], i) => {
    const [nx, ny] = pts[(i + 1) % pts.length]
    const dx = nx - x
    const dy = ny - y
    const len = Math.hypot(dx, dy)
    if (len > 60) return `${x} ${y}`
    const w = (k: number) => Math.sin(i * 5.3 + k * 2.9) * 2
    return [0, 1, 2, 3].map((k) => {
      const o = k ? w(k) : 0
      return `${(x + (dx * k) / 4 - (dy / len) * o).toFixed(1)} ${(y + (dy * k) / 4 + (dx / len) * o).toFixed(1)}`
    }).join('L')
  }).join('L') + 'z'
const west = boundary([
  [257, 376], [265, 368], [277, 364], [290, 360], [305, 357], [313, 357], [326, 361], [338, 372], [349, 378], [361, 376], [366, 383],
  [378, 379], [388, 376], [410, 364], [410, 541], [384, 538], [372, 534], [364, 538], [356, 548], [349, 557], [336, 566], [326, 573],
  [315, 574], [303, 579], [292, 574], [285, 568], [270, 571], [255, 570], [247, 567], [242, 554], [234, 543], [230, 533], [220, 524],
  [212, 522], [204, 529], [196, 524], [197, 512], [202, 503], [209, 493], [206, 480], [209, 469], [197, 457], [209, 447], [217, 437],
  [214, 425], [219, 415], [224, 403], [234, 395], [248, 388],
])
</script>

<template>
  <div class="desktop">
    <header class="title"><Ico n="qgis" />*未命名的工程 -</header>
    <nav class="menubar">
      <div class="menus first">
        <button v-for="m in menuLeft" :key="m[1]">{{ m[0] }}(<u>{{ m[1] }}</u>)</button>
      </div>
      <div class="menus second">
        <button v-for="m in menuRight" :key="m[1]">{{ m[0] }}(<u>{{ m[1] }}</u>)</button>
      </div>
    </nav>
    <div v-for="(bar, b) in toolbars" :key="b" class="toolbar">
      <div class="tools first">
        <span class="handle"></span>
        <button v-for="t in bar.left" :key="t" class="tool"><Ico :n="t" /></button>
      </div>
      <div class="tools">
        <template v-for="(t, i) in bar.right" :key="i">
          <span v-if="t === '|'" class="handle wide"></span>
          <span v-else-if="t === '/'" class="vsep"></span>
          <button v-else class="tool" :class="{ pressed: t.endsWith('*'), drop: t.endsWith('+') }">
            <Ico :n="bare(t)" /><Ico v-if="t.endsWith('+')" n="down" class="arrow" />
          </button>
        </template>
      </div>
    </div>

    <div class="work">
      <aside class="dock">
        <section class="browser">
          <h2>浏览器</h2>
          <div class="minibar">
            <button><Ico n="boxplus" /></button><button><Ico n="refresh" /></button><button><Ico n="funnel" /></button><button><Ico n="collapse" /></button>
          </div>
          <ul class="tree">
            <li v-for="t in tree" :key="t[1]">
              <span class="twist"><Ico v-if="t[2]" n="right" /></span><Ico :n="t[0]" class="leaf" />{{ t[1] }}
            </li>
          </ul>
        </section>
        <section class="layers">
          <h2>图层</h2>
          <div class="minibar">
            <button><Ico n="style" /></button><button><Ico n="group" /></button><button><Ico n="eye" /></button><button><Ico n="funneldd" /></button>
          </div>
          <ul class="tree grow">
            <li v-for="l in layers" :key="l.name" :class="{ active: l.active }">
              <label class="layer">
                <input v-model="l.on" type="checkbox" />
                <span class="sym" :class="l.kind"></span>
                <b>{{ l.name }}</b>
              </label>
              <span v-if="l.active" class="mem"><Ico n="memory" /></span>
            </li>
          </ul>
        </section>
      </aside>
      <div class="splitter"></div>
      <main class="canvas">
        <div class="message">
          <Ico n="check" /><b>图层已导出:</b><span>成功保存矢量图层<a href="#" class="mono">C:\Users\Administrator\Desktop</a></span>
          <i>准信息</i>
        </div>
        <svg class="map" aria-hidden="true">
          <path :d="west" />
          <path d="M400 422l-8-5-7-4-4 1 2 14 3 8-1 12 4 7 11 4M400 462l-7 4-3 8-4 3 6 4-5 3v5l13 2" class="inner" />
          <path d="M1210 212q14-6 20 0 7 6 17 7v313l-5-3-4 1-2-5-3-5-3 3-2 8-4 8-14 3z" />
        </svg>
      </main>
    </div>

    <section class="dialog" role="dialog">
      <header class="dtitle">
        <Ico n="qgis" />图层属性 — 计数 — 标注
        <button class="x" aria-label="Cancel"><Ico n="close" /></button>
      </header>
      <div class="dbody">
        <nav class="side">
          <label class="find"><Ico n="search" /><input type="text" aria-label="search" /></label>
          <button v-for="t in tabs" :key="t[0]" class="tab" :class="{ on: t[1] === activeTab }" @click="activeTab = t[1]">
            <Ico :n="t[0]" />{{ t[1] }}
          </button>
        </nav>
        <div class="content">
          <div class="line">
            <div class="combo flat">
              <Ico n="labels" class="lead" />
              <select aria-label="标注"><option>单一标注</option></select>
              <Ico n="down" class="dd" />
            </div>
            <button class="btn sq"><Ico n="sunset" /></button>
          </div>
          <div class="line value">
            <label for="val">值</label>
            <div class="combo edit focus">
              <span class="num">1.2</span>
              <input id="val" class="mono" type="text" value="NUMPOINTS" />
              <span class="ddbox"><Ico n="down" /></span>
            </div>
            <button class="btn sq eps">ε</button>
          </div>
          <h3><Ico n="down" />文本样例</h3>
          <div class="frame">
            <div class="preview">
              <p>Lorem Ipsum <span>乱数假文</span></p>
              <div class="vscroll"><span><Ico n="up" /></span><i></i><em></em><span><Ico n="down" /></span></div>
            </div>
            <div class="sample">
              <input v-model="sample" class="field mono" type="text" aria-label="文本样例" />
              <button class="btn u"><Ico n="undoorange" /></button>
              <div class="combo edit scale">
                <input class="mono" type="text" value="1:705650" aria-label="1:705650" />
                <span class="ddbox"><Ico n="down" /></span>
              </div>
              <div class="pair"><button class="btn u"><Ico n="mapcursor" /></button><button class="btn thin"><Ico n="down" /></button></div>
              <div class="pair"><button class="btn colour"></button><button class="btn thin"><Ico n="down" /></button></div>
            </div>
          </div>
          <div class="grip"></div>
          <div class="split">
            <ul class="parts">
              <li v-for="p in parts" :key="p[0]" :class="{ on: p[1] === activePart }" @click="activePart = p[1]"><Ico :n="p[0]" />{{ p[1] }}</li>
            </ul>
            <div class="panel">
              <h4>文本</h4>
              <div class="rows">
                <div class="row font">
                  <label for="font">字体</label>
                  <div class="combo edit tall"><input id="font" class="mono" type="text" value="Arial" /><span class="ddbox"><Ico n="down" /></span></div>
                  <button class="def"><Ico n="define" /></button>
                </div>
                <div class="row">
                  <label for="style">样式</label>
                  <div class="combo flat"><select id="style" class="mono"><option>Regular</option></select><Ico n="down" class="dd" /></div>
                  <button class="def"><Ico n="define" /></button>
                </div>
                <div class="row">
                  <span class="gap"></span>
                  <div class="fmt">
                    <button class="btn sq"><u>U</u></button><button class="def"><Ico n="define" /></button>
                    <button class="btn sq"><s>S</s></button><button class="def"><Ico n="define" /></button>
                    <span class="push"></span>
                    <button class="btn sq dim">B</button><button class="def"><Ico n="define" /></button>
                    <button class="btn sq dim"><em>I</em></button>
                  </div>
                  <button class="def"><Ico n="define" /></button>
                </div>
                <div class="row">
                  <label for="size">大小</label>
                  <div class="combo edit"><input id="size" v-model="size" class="mono" type="text" /><span class="spin"><Ico n="up" /><Ico n="down" /></span></div>
                  <button class="def"><Ico n="define" /></button>
                </div>
                <div class="row">
                  <span class="gap"></span>
                  <div class="combo flat"><select aria-label="大小"><option>点</option></select><Ico n="down" class="dd" /></div>
                  <button class="def"><Ico n="define" /></button>
                </div>
                <div class="row">
                  <label for="colour">颜色</label>
                  <div class="pair wide"><button id="colour" class="btn ink"><span></span></button><button class="btn thin"><Ico n="down" /></button></div>
                  <button class="def"><Ico n="define" /></button>
                </div>
                <div class="row">
                  <label for="opacity">不透明度</label>
                  <div class="opac">
                    <input id="opacity" v-model="opacity" type="range" min="0" max="100" />
                    <div class="combo edit pct"><input class="mono" type="text" :value="Number(opacity).toFixed(1) + ' %'" aria-label="不透明度" /><span class="spin"><Ico n="up" class="faint" /><Ico n="down" /></span></div>
                  </div>
                  <button class="def"><Ico n="define" /></button>
                </div>
                <label class="allow"><input v-model="html" type="checkbox" />允许 <span class="mono">HTML</span> 格式化</label>
              </div>
              <div class="presets">
                <div class="combo edit"><Ico n="search" class="lead" /><input v-model="preset" type="text" aria-label="收藏夹" /><Ico n="clear" class="clr" /><span class="ddbox"><Ico n="down" /></span></div>
                <button class="def"><Ico n="manage" /></button>
              </div>
              <ul class="gallery">
                <li><div class="card">Aa</div>Default</li>
                <li><div class="card water"><em>Aa</em><Ico n="labels" /></div>water bodies</li>
              </ul>
              <div class="views">
                <button class="view on"><Ico n="icongrid" /></button><button class="view"><Ico n="table" /></button>
                <button class="btn store">保存设置...</button>
              </div>
            </div>
          </div>
          <footer class="actions">
            <button class="btn cjk">样式<Ico n="down" /></button>
            <span class="push"></span>
            <button class="btn primary">OK</button><button class="btn">Cancel</button><button class="btn">Apply</button><button class="btn">Help</button>
          </footer>
        </div>
      </div>
    </section>

    <ul class="context">
      <li v-for="(g, gi) in ctxGroups" :key="gi">
        <button v-for="m in g" :key="m.t" :class="{ off: m.off, on: m.on }" :disabled="m.off">
          <span class="mi"><Ico v-if="m.icon" :n="m.icon" /></span>
          <span>{{ m.t }}<template v-if="m.k">(<u>{{ m.k }}</u>)</template>{{ m.tail }}</span>
          <Ico v-if="m.sub" n="right" class="sub" />
        </button>
      </li>
    </ul>

    <div class="ime">
      <svg viewBox="0 0 32 32" class="sogou" aria-hidden="true">
        <path d="M3 6 25 1q3 0 4 3l3 20q0 3-3 3L9 31q-3 0-4-3L1 9q0-2 2-3z" fill="#e95a28" />
        <path d="M25 9q-8-3-14 0-4 3 1 5l9 2q5 3-1 6-6 2-13-1" fill="none" stroke="#fff" stroke-width="4.500" />
      </svg>
      <div class="imebar">
        <b>英</b><b>•,</b>
        <svg viewBox="0 0 16 18" width="12" aria-hidden="true"><rect x="4" y="0" width="8" height="11" rx="4" fill="#0d6fc9" /><path d="M2 7q0 6 6 6t6-6M8 13v4M5 17h6" fill="none" stroke="#0d6fc9" stroke-width="2" /></svg>
        <svg viewBox="0 0 16 12" width="16" aria-hidden="true"><rect x="1" y="1" width="14" height="10" rx="1" fill="none" stroke="#0d6fc9" stroke-width="1.500" /><path d="M3 4h10M3 6.500h10M5 9h6" stroke="#0d6fc9" stroke-width="1.300" stroke-dasharray="1.500 .8" /></svg>
      </div>
    </div>

    <div class="mark m1"></div>
    <div class="mark m2"></div>
    <div class="mark m3"></div>
    <svg class="arrows" aria-hidden="true">
      <path d="M803 183l72-5-1-5 22 10-22 10 1-6z" />
      <path d="M816 251l64-18-4-10 23 7-19 15-1-7z" />
      <path d="M101 637l45-48-4-7 22-9-6 23-5-4z" />
      <path d="M1210 906q26 30 43 46l9-4 5 25-20-7 3-5q-18-22-40-55z" />
    </svg>
    <div class="watermark">知乎 @追风GIS</div>
  </div>
</template>

<style>
body { margin: 0; overflow: hidden; }
</style>

<style scoped>
.desktop { position: relative; display: flex; flex-direction: column; height: 100vh; overflow: hidden; background: #f0f0f0; color: #111; font: 12px/16px "Noto Sans", "Noto Sans CJK SC", sans-serif; }
.desktop * { box-sizing: border-box; }
ul { list-style: none; margin: 0; padding: 0; }
h2, h3, h4, p { margin: 0; font-size: 12px; font-weight: 400; }
button, input, select { font: inherit; color: inherit; margin: 0; padding: 0; border: 0; background: none; outline: 0; }
.ic { width: 16px; height: 16px; flex: none; display: block; overflow: visible; }
.mono { font-family: "DejaVu Sans Mono", "Noto Sans CJK SC", monospace; font-size: 10px; }
.push { flex: 1; }

.title { display: flex; align-items: center; gap: 3px; height: 18px; padding-bottom: 4px; background: #fff; white-space: pre; flex: none; }
.menubar { display: flex; height: 22px; flex: none; border-bottom: 1px solid #d0d0d0; }
.menus { display: flex; gap: 15px; align-items: center; white-space: nowrap; }
.menus.first { width: 323px; padding-left: 8px; }
.menus.second { gap: 16px; }
.toolbar { display: flex; height: 39px; flex: none; border-bottom: 1px solid #b4b4b4; background: linear-gradient(#fafafa, #ededed); }
.tools { display: flex; align-items: center; }
.tools.first { width: 323px; }
.handle { width: 5px; height: 20px; margin: 0 2px; background: radial-gradient(circle at 1px 1px, #ccc 1px, transparent 1px) 0 0 / 3px 3px; }
.handle.wide { margin: 0 2px 0 8px; }
.vsep { width: 1px; height: 20px; background: #c9c9c9; margin: 0 3px; }
.tool { width: 33px; height: 32px; display: flex; align-items: center; justify-content: center; flex: none; border-radius: 3px; }
.tool .ic { width: 23px; height: 23px; }
.tool.drop { width: 45px; padding-left: 4px; }
.tool .arrow { width: 11px; height: 11px; margin-left: 5px; }
.tool.pressed { background: #d9d9d9; border: 1px solid #b5b5b5; }

.work { flex: 1; display: flex; min-height: 0; }
.dock { width: 338px; flex: none; display: flex; flex-direction: column; }
.browser { height: 320px; display: flex; flex-direction: column; border-bottom: 1px solid #aaa; }
.layers { flex: 1; display: flex; flex-direction: column; padding-top: 5px; }
h2 { padding: 2px 1px; }
.minibar { display: flex; gap: 9px; align-items: center; height: 30px; padding-left: 5px; flex: none; }
.tree { background: #fff; border-top: 1px solid #b0b0b0; }
.tree.grow { flex: 1; }
.tree li { display: flex; align-items: center; height: 19px; white-space: nowrap; }
.twist { width: 17px; }
.twist .ic { width: 12px; height: 12px; }
.leaf { margin-right: 6px; }
.layers .tree { margin-top: 1px; }
.tree li.active { background: #0078d7; color: #fff; }
.layer { display: flex; align-items: center; flex: 1; padding-left: 21px; }
.layer input, .allow input { appearance: none; width: 14px; height: 14px; background: #fff; border: 1px solid #b5b5b5; }
.layer input:checked::after { content: ""; display: block; width: 12px; height: 12px; background: #111; clip-path: polygon(10% 50%, 25% 40%, 42% 65%, 75% 5%, 92% 10%, 48% 95%, 38% 95%); }
.sym { width: 16px; height: 16px; margin: 0 7px 0 6px; }
.sym.brown { background: #a56f57; border: 1px solid #7c513f; }
.sym.green { background: #7eb26d; border: 1px solid #55804a; }
.sym.dot { width: 7px; height: 7px; margin: 0 12px 0 10px; border-radius: 50%; background: #666; }
.layer b { font-style: italic; color: #7d7d7d; }
.active b { color: #fff; font-style: normal; text-decoration: underline; }
.mem { background: #fff; margin-right: 11px; width: 17px; height: 15px; display: grid; place-items: center; }
.mem .ic { width: 14px; height: 14px; }
.splitter { width: 6px; flex: none; background: #ededed; border-left: 1px solid #bbb; }
.canvas { flex: 1; min-width: 0; position: relative; background: #fff; border-left: 1px solid #999; }
.message { display: flex; align-items: center; height: 28px; padding-left: 9px; background: #dff0d8; border: 1px solid #a3b89c; border-width: 1px 0; white-space: nowrap; }
.message .ic { width: 24px; height: 20px; margin-right: 9px; }
.message b { width: 80px; }
.message a { color: #2f7d1c; }
.message i { margin-left: auto; }
.map { position: absolute; left: 0; top: 28px; width: 100%; height: 100%; overflow: hidden; }
.map path { fill: #a57158; stroke: #3a2b24; stroke-width: 1; }
.map .inner { fill: none; }

.dialog { position: absolute; left: 740px; right: 24px; top: 144px; bottom: 12px; display: flex; flex-direction: column; background: #f0f0f0; border: 1px solid #666; box-shadow: 0 2px 8px rgba(0, 0, 0, .35); }
.dtitle { display: flex; align-items: center; gap: 5px; height: 30px; padding: 0 8px; background: #fff; flex: none; }
.x { margin-left: auto; }
.x .ic { width: 12px; height: 12px; }
.dbody { flex: 1; display: flex; min-height: 0; }
.side { width: 150px; flex: none; background: #5c5c5c; color: #fff; overflow: hidden; }
.find { display: flex; align-items: center; height: 22px; margin-bottom: 6px; padding-left: 8px; gap: 6px; background: #fff; border-radius: 2px; color: #111; }
.find .ic { width: 14px; height: 14px; }
.find input { flex: 1; min-width: 0; }
.tab { display: flex; align-items: center; gap: 8px; width: 100%; height: 36px; padding: 2px 0 0 5px; white-space: nowrap; }
.tab .ic { width: 24px; height: 24px; }
.tab.on { background: #f0f0f0; color: #111; padding-left: 8px; }
.content { flex: 1; min-width: 0; display: flex; flex-direction: column; padding: 3px 3px 2px 4px; }
.line { display: flex; align-items: center; gap: 6px; height: 24px; margin-bottom: 6px; flex: none; }
.line.value { margin-bottom: 0; }
.combo { position: relative; display: flex; align-items: center; flex: 1; min-width: 0; height: 22px; border: 1px solid #a9a9a9; border-radius: 3px; background: #fff; overflow: hidden; }
.line .combo, .combo.tall { height: 24px; }
.combo.flat { background: linear-gradient(#fff, #ebebeb); }
.combo.focus { border-color: #4a9fdc; }
.combo select { appearance: none; flex: 1; min-width: 0; height: 100%; padding: 0 3px; }
.combo input { flex: 1; min-width: 0; height: 100%; padding-left: 3px; }
.combo .lead { margin: 0 0 0 6px; width: 14px; height: 14px; }
.combo .dd { position: absolute; right: 5px; width: 12px; height: 12px; pointer-events: none; }
.ddbox { width: 20px; height: 100%; display: grid; place-items: center; border-left: 1px solid #a9a9a9; background: linear-gradient(#fff, #ededed); flex: none; }
.ddbox .ic { width: 12px; height: 12px; }
.num { font-family: "Liberation Mono", monospace; font-size: 10px; color: #999; margin-left: 2px; }
.btn { display: flex; align-items: center; justify-content: center; height: 22px; border: 1px solid #a9a9a9; border-radius: 3px; background: linear-gradient(#fff, #ebebeb); font-family: "DejaVu Sans Mono", "Noto Sans CJK SC", monospace; font-size: 10px; flex: none; }
.btn.sq { width: 24px; height: 24px; font: 14px/20px "Liberation Serif", serif; }
.btn.eps { font-size: 18px; color: #4a3d55; }
.btn.dim { color: #777; border-color: #c4c4c4; }
.btn.u { width: 24px; }
.btn.u .ic { width: 15px; height: 15px; }
.btn.thin { width: 12px; }
.btn.thin .ic { width: 10px; height: 10px; }
h3 { display: flex; align-items: center; gap: 4px; height: 24px; padding-top: 3px; font-size: 13px; font-weight: 700; flex: none; }
h3 .ic { width: 18px; height: 18px; }
.frame { margin-left: 1px; padding: 5px 2px 2px 1px; border: 1px solid #d8d8d8; border-radius: 3px; flex: none; }
.preview { display: flex; height: 70px; background: #fff; border: 1px solid #a9a9a9; }
.preview p { flex: 1; padding: 9px 10px; font: 13px/17px "Liberation Sans", "Noto Sans CJK SC", sans-serif; color: #444; }
.preview p span { color: #888; }
.vscroll { width: 14px; display: flex; flex-direction: column; border-left: 1px solid #b5b5b5; }
.vscroll span { height: 14px; display: grid; place-items: center; }
.vscroll .ic { width: 11px; height: 11px; }
.vscroll i { height: 27px; border: 1px solid #bbb; border-width: 1px 0; }
.vscroll em { flex: 1; background: #e0e0e0; }
.sample { display: flex; height: 22px; }
.field { flex: 1; min-width: 0; height: 22px; padding-left: 2px; background: #fff; border: 1px solid #a9a9a9; border-radius: 3px; }
.field.mono { font-size: 11px; }
.combo.scale { flex: 0 0 83px; margin: 0 6px; }
.pair { display: flex; margin-right: 6px; }
.pair:last-child, .pair.wide { margin-right: 0; }
.btn.colour { width: 88px; background: #fff; }
.grip { height: 5px; flex: none; width: 18px; align-self: center; background: radial-gradient(circle at 1px 1px, #ccc 1px, transparent 1px) 0 0 / 3px 3px; }
.split { flex: 1; display: flex; min-height: 0; margin-left: 3px; }
.parts { width: 111px; flex: none; background: #fff; border: 1px solid #a9a9a9; margin-right: 5px; }
.parts li { display: flex; align-items: center; gap: 7px; height: 22px; padding: 1px 0 0 4px; }
.parts .ic { width: 19px; height: 19px; }
.parts li.on { background: #f0f0f0; }
.panel { flex: 1; min-width: 0; display: flex; flex-direction: column; }
h4 { height: 19px; line-height: 13px; }
.rows { display: flex; flex-direction: column; gap: 8px; margin-right: 9px; }
.row { display: flex; align-items: center; height: 24px; }
.row.font { margin-bottom: 6px; }
.row > label, .gap { width: 54px; flex: none; white-space: nowrap; }
.def { width: 24px; height: 22px; display: grid; place-items: center; flex: none; }
.def .ic { width: 20px; height: 20px; }
.row > .def { margin-left: 9px; }
.fmt { flex: 1; display: flex; align-items: center; gap: 9px; }
.spin { width: 14px; height: 100%; border-left: 1px solid #b5b5b5; display: flex; flex-direction: column; align-items: center; justify-content: center; flex: none; }
.spin .ic { width: 10px; height: 9px; }
.faint { opacity: .5; }
.pair.wide { flex: 1; }
.btn.ink { flex: 1; padding: 2px 3px; }
.ink span { width: 100%; height: 100%; border-radius: 3px; background: #323232; }
.opac { flex: 1; display: flex; align-items: center; gap: 5px; min-width: 0; }
.combo.pct { flex: 0 0 100px; }
input[type="range"] { appearance: none; flex: 1; min-width: 0; height: 16px; background: linear-gradient(#0f63a8 0 1px, #2394e0 1px 4px, #0f63a8 4px 5px) 0 5px / 100% 5px no-repeat; }
input[type="range"]::-webkit-slider-thumb { appearance: none; width: 12px; height: 13px; background: #fff; border: 1px solid #a0a0a0; border-radius: 3px; }
.allow { display: flex; align-items: center; gap: 4px; height: 16px; }
.presets { display: flex; align-items: center; margin: 13px 6px 4px 0; gap: 7px; height: 23px; flex: none; }
.presets .lead { margin: 0 4px 0 8px; }
.presets .clr { width: 13px; height: 13px; margin-right: 8px; }
.presets .def .ic { width: 16px; height: 16px; }
.gallery { flex: 1; display: flex; gap: 35px; margin-right: 6px; padding: 2px 17px; background: #fff; border: 1px solid #a9a9a9; min-height: 0; }
.gallery li { width: 90px; text-align: center; white-space: nowrap; }
.card { position: relative; display: grid; place-items: center; height: 81px; margin-bottom: 2px; border: 1px solid #ccc; border-radius: 5px; color: #444; }
.card.water { background: linear-gradient(#fff, #c4dfe9); border-color: #9fb3bd; color: #2f93b0; font: 14px/18px "Liberation Serif", serif; }
.card .ic { position: absolute; right: 9px; bottom: 10px; }
.views { display: flex; align-items: center; height: 24px; margin: 5px 6px 0 0; flex: none; }
.view { width: 24px; height: 24px; display: grid; place-items: center; border-radius: 3px; }
.view .ic { width: 14px; height: 14px; }
.view.on { background: #dcdcdc; border: 1px solid #aaa; }
.btn.store { width: 80px; height: 20px; margin-left: auto; font-family: "Noto Sans", "Noto Sans CJK SC", sans-serif; font-size: 12px; }
.actions { display: flex; gap: 6px; margin-top: 6px; flex: none; }
.actions .btn { width: 80px; height: 21px; }
.actions .cjk { font-size: 12px; padding-left: 16px; gap: 20px; }
.cjk .ic { width: 10px; height: 10px; }
.btn.primary { border-color: #4a9fdc; }

.context { position: absolute; left: 104px; top: -5px; width: 232px; background: #fff; border: 1px solid #979797; border-width: 0 1px; z-index: 2; }
.context li + li::before { content: ""; display: block; height: 1px; margin: 0 4px; border-top: 1px solid #bdbdbd; }
.context button { display: flex; align-items: center; width: 100%; height: 25px; padding-left: 6px; text-align: left; white-space: nowrap; }
.mi { width: 21px; flex: none; }
.context .mi .ic { width: 14px; height: 14px; }
.context .sub { margin-left: auto; width: 12px; height: 12px; }
.context .off { color: #7a7a7a; }
.context .on { background: #0078d7; color: #fff; }

.ime { position: absolute; right: 0; top: 23px; display: flex; align-items: center; }
.sogou { width: 32px; height: 32px; position: relative; }
.imebar { display: flex; align-items: center; gap: 12px; width: 106px; height: 26px; margin-left: -3px; padding-left: 9px; background: #fff; border: 1px solid #b9cfe0; border-right: 0; color: #0d6fc9; font-size: 14px; }

.mark { position: absolute; border: 2px solid #c22d3a; z-index: 3; pointer-events: none; }
.m1 { left: 893px; top: 173px; width: 165px; height: 28px; }
.m2 { left: 901px; top: 208px; width: 320px; height: 29px; }
.m3 { left: 101px; top: 528px; width: 248px; height: 30px; }
.arrows { position: absolute; left: 0; top: 0; width: 100%; height: 100%; z-index: 3; pointer-events: none; }
.arrows path { fill: #e8202a; }
.watermark { position: absolute; right: 40px; bottom: 38px; font: 48px/60px "Noto Sans CJK SC", sans-serif; color: #fff; text-shadow: 2px 2px 1px rgba(110, 110, 110, .7); white-space: nowrap; z-index: 3; pointer-events: none; }
</style>
